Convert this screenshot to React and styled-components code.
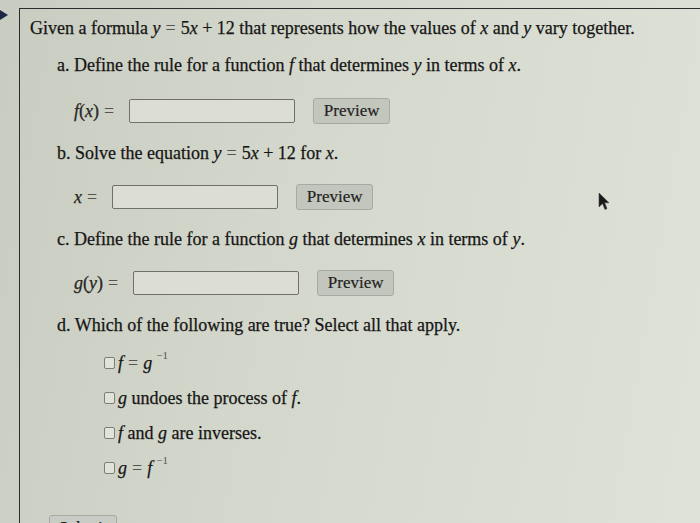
import React from "react";
import styled, { createGlobalStyle } from "styled-components";

const GlobalStyle = createGlobalStyle`
  html, body {
    margin: 0;
    padding: 0;
    background: #d3d6cb;
  }
`;

const Page = styled.div`
  position: relative;
  width: 700px;
  height: 523px;
  overflow: hidden;
  background: linear-gradient(100deg, #c9ccc0 0%, #d4d7cb 40%, #dfe2d8 100%);
  font-family: "Liberation Serif", "Times New Roman", serif;
  color: #161616;
  -webkit-text-stroke: 0.25px #161616;
`;

const Marker = styled.div`
  position: absolute;
  left: 0;
  top: 10px;
  width: 0;
  height: 0;
  border-top: 5px solid transparent;
  border-bottom: 5px solid transparent;
  border-left: 8px solid #1c2946;
`;

const Cursor = styled.svg`
  position: absolute;
  left: 598px;
  top: 192px;
`;

const Frame = styled.div`
  margin: 8px 0 0 19px;
  height: 600px;
  padding: 9px 0 0 10px;
  border-top: 1.5px solid #2c2c2c;
  border-left: 1.5px solid #2c2c2c;
  display: flex;
  flex-direction: column;
`;

const Title = styled.div`
  font-size: 18px;
  line-height: 20px;
  white-space: nowrap;
`;

const Parts = styled.div`
  margin: 17px 0 0 27px;
  display: flex;
  flex-direction: column;
  gap: 19px;
`;

const Part = styled.div`
  display: flex;
  flex-direction: column;
  gap: ${(p) => p.$gap || 21}px;
`;

const Heading = styled.div`
  font-size: 18px;
  line-height: 20px;
  white-space: nowrap;
`;

const Row = styled.div`
  margin-left: 17px;
  height: 26px;
  display: flex;
  align-items: center;
`;

const Label = styled.span`
  font-size: 18px;
  color: #2a2a2a;
  margin-right: 10px;
  white-space: nowrap;
`;

const M = styled.i`
  font-family: "Liberation Serif", serif;
  font-style: italic;
`;

const Eq = styled.span`
  color: #555;
  -webkit-text-stroke: 0;
  margin: 0 ${(p) => p.$space || 5}px;
`;

const Input = styled.div`
  box-sizing: border-box;
  width: 166px;
  height: 24px;
  border: 1.5px solid #6e706a;
  border-radius: 2px;
  background: #dcded5;
`;

const Preview = styled.button`
  box-sizing: border-box;
  margin-left: 18px;
  width: 77px;
  height: 26px;
  padding: 0;
  border: 1px solid #a6aaa2;
  border-radius: 3px;
  background: #c2c6bd;
  font-family: "Liberation Serif", "Times New Roman", serif;
  font-size: 17px;
  color: #222;
  -webkit-text-stroke: 0.2px #222;
`;

const Options = styled.div`
  margin: 18px 0 0 74px;
  display: flex;
  flex-direction: column;
  gap: 15px;
`;

const Option = styled.label`
  display: flex;
  align-items: center;
  height: 20px;
  font-size: 18px;
  white-space: nowrap;
`;

const Box = styled.span`
  box-sizing: border-box;
  flex: none;
  width: 11px;
  height: 12px;
  margin-right: 3px;
  border: 1px solid #7c7e78;
  border-radius: 2px;
  background: #e1e3da;
`;

const Sup = styled.sup`
  font-size: 11px;
  color: #555;
  -webkit-text-stroke: 0;
  margin-left: 4px;
  position: relative;
  top: -3px;
`;

const Submit = styled.button`
  margin: 37px 0 0 19px;
  align-self: flex-start;
  width: 68px;
  height: 26px;
  border: 1px solid #a6aaa2;
  border-radius: 3px;
  background: #c9ccc4;
  font-family: "Liberation Serif", "Times New Roman", serif;
  font-size: 17px;
  color: #262626;
`;

function AnswerRow({ label }) {
  return (
    <Row>
      <Label>{label}</Label>
      <Input />
      <Preview>Preview</Preview>
    </Row>
  );
}

export default function App() {
  return (
    <Page>
      <GlobalStyle />
      <Marker />
      <Frame>
        <Title>
          Given a formula <M>y</M>
          <Eq>=</Eq>5<M>x</M> + 12 that represents how the values of{" "}
          <M>x</M> and <M>y</M> vary together.
        </Title>
        <Parts>
          <Part $gap={23}>
            <Heading>
              a. Define the rule for a function <M>f</M> that determines <M>y</M> in
              terms of <M>x</M>.
            </Heading>
            <AnswerRow
              label={
                <>
                  <M>f</M>(<M>x</M>)<Eq>=</Eq>
                </>
              }
            />
          </Part>
          <Part>
            <Heading>
              b. Solve the equation <M>y</M>
              <Eq>=</Eq>5<M>x</M> + 12 for <M>x</M>.
            </Heading>
            <AnswerRow
              label={
                <>
                  <M>x</M>
                  <Eq>=</Eq>
                </>
              }
            />
          </Part>
          <Part>
            <Heading>
              c. Define the rule for a function <M>g</M> that determines <M>x</M> in
              terms of <M>y</M>.
            </Heading>
            <AnswerRow
              label={
                <>
                  <M>g</M>(<M>y</M>)<Eq>=</Eq>
                </>
              }
            />
          </Part>
          <Part>
            <Heading>d. Which of the following are true? Select all that apply.</Heading>
          </Part>
        </Parts>
        <Options>
          <Option>
            <Box />
            <span>
              <M>f</M>
              <Eq>=</Eq>
              <M>g</M>
              <Sup>−1</Sup>
            </span>
          </Option>
          <Option>
            <Box />
            <span>
              <M>g</M> undoes the process of <M>f</M>.
            </span>
          </Option>
          <Option>
            <Box />
            <span>
              <M>f</M> and <M>g</M> are inverses.
            </span>
          </Option>
          <Option>
            <Box />
            <span>
              <M>g</M>
              <Eq>=</Eq>
              <M>f</M>
              <Sup>−1</Sup>
            </span>
          </Option>
        </Options>
        <Submit>Submit</Submit>
      </Frame>
      <Cursor width="12" height="19" viewBox="0 0 12 19">
        <path d="M1 1 L1 15 L4.5 11.5 L7 17.5 L9 16.6 L6.6 10.8 L11 10.8 Z" fill="#1a1a1a" stroke="#444" strokeWidth="0.6" />
      </Cursor>
    </Page>
  );
}
